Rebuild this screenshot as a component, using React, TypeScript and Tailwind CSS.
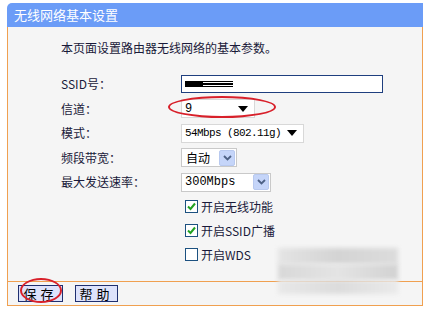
import React from "react";

const cjk = { fontFamily: '"SimSun", "Noto Sans CJK SC", sans-serif' };

const XpArrow = () => (
  <span className="flex h-[16px] w-[16px] items-center justify-center rounded-[2px] border border-[#b8c9ef] bg-[#c5d5f9]">
    <svg width="9" height="6" viewBox="0 0 9 6">
      <path d="M1 1 L4.5 4.5 L8 1" fill="none" stroke="#4d6185" strokeWidth="1.8" />
    </svg>
  </span>
);

const Tri = () => (
  <svg width="10" height="6" viewBox="0 0 10 6">
    <path d="M0 0 H10 L5 6 Z" fill="#000" />
  </svg>
);

const Check = ({ checked, label }: { checked: boolean; label: string }) => (
  <div className="flex h-[24px] items-center gap-[3px] pl-[4px]">
    <span className="flex h-[13px] w-[13px] items-center justify-center border border-[#1c5180] bg-white">
      {checked && (
        <svg width="9" height="9" viewBox="0 0 9 9">
          <path d="M1 4.5 L3.5 7 L8 1.5" fill="none" stroke="#21a121" strokeWidth="2" />
        </svg>
      )}
    </span>
    <span className="text-[12px] text-[#1a1a3a]">{label}</span>
  </div>
);

const Row = ({ label, children }: { label: string; children: React.ReactNode }) => (
  <div className="flex h-[24.5px] items-center">
    <span className="w-[120px] text-[12px] text-[#1a1a3a]">{label}</span>
    {children}
  </div>
);

export default function App() {
  return (
    <div className="relative h-[310px] w-[427px] bg-white pt-[3px] pl-[7px]" style={cjk}>
      <div className="w-[416px]">
        {/* header */}
        <div className="flex h-[24px] items-center rounded-tl-[5px] bg-[#6b9cf7] pl-[7px] text-[13px] text-white">
          无线网络基本设置
        </div>

        {/* body */}
        <div className="border-x border-[#f0a050] bg-[#f5f5f5]">
          <div className="pl-[53px] pt-[12px]">
            <div className="h-[18px] text-[12px] leading-[18px] text-[#1a1a3a]">本页面设置路由器无线网络的基本参数。</div>
            <div className="mt-[15px]">
              <Row label="SSID号：">
                <div className="flex h-[18px] w-[202px] items-center border border-[#1f3f7f] bg-white pl-[3px]">
                  <span className="h-[6px] w-[18px] bg-black" />
                  <span className="flex w-[30px] flex-col gap-[1px]">
                    <span className="h-[1px] bg-black" />
                    <span className="h-[2px] bg-black" />
                    <span className="h-[1px] bg-black" />
                  </span>
                </div>
              </Row>
              <Row label="信道：">
                <div className="flex h-[19px] w-[74px] items-center justify-between border border-[#d8d8d8] bg-white pr-[6px] pl-[3px] text-[12px]" style={{ fontFamily: '"Liberation Mono", monospace' }}>
                  <span>9</span>
                  <Tri />
                </div>
              </Row>
              <Row label="模式：">
                <div className="flex h-[19px] w-[123px] items-center justify-between border border-[#d8d8d8] bg-white pr-[6px] pl-[3px]">
                  <span style={{ fontFamily: '"Liberation Mono", monospace' }} className="whitespace-nowrap text-[11px] tracking-[-0.6px]">54Mbps (802.11g)</span>
                  <Tri />
                </div>
              </Row>
              <Row label="频段带宽：">
                <div className="flex h-[19px] w-[56px] items-center justify-between border border-[#c9c9c9] bg-white pr-[1px] pl-[4px] text-[12px]">
                  <span>自动</span>
                  <XpArrow />
                </div>
              </Row>
              <Row label="最大发送速率：">
                <div className="flex h-[19px] w-[90px] items-center justify-between border border-[#c9c9c9] bg-white pr-[1px] pl-[3px] text-[12px]">
                  <span style={{ fontFamily: '"Liberation Mono", monospace' }}>300Mbps</span>
                  <XpArrow />
                </div>
              </Row>
            </div>
            <div className="ml-[120px]">
              <Check checked label="开启无线功能" />
              <Check checked label="开启SSID广播" />
              <Check checked={false} label="开启WDS" />
            </div>
          </div>
          <div className="h-[14px]" />
        </div>

        {/* footer */}
        <div className="flex h-[25px] items-center gap-[12px] border border-[#f0a050] bg-[#f5f5f5] pl-[10px]">
          <button className="h-[17px] w-[45px] border border-[#1f2f6f] bg-[#dde2fb] text-[13px] leading-[15px] tracking-[4px] text-black">保存</button>
          <button className="h-[17px] w-[43px] border border-[#1f2f6f] bg-[#dde2fb] text-[13px] leading-[15px] tracking-[4px] text-black">帮助</button>
        </div>
      </div>

      {/* red annotation ellipses */}
      <div className="pointer-events-none absolute left-[168px] top-[96px] h-[22px] w-[108px] rounded-[50%] border-2 border-[#d8202a]" />
      <div className="pointer-events-none absolute left-[20px] top-[278px] h-[25px] w-[42px] rounded-[50%] border-2 border-[#d8202a]" />

      {/* blurred watermark */}
      <div className="pointer-events-none absolute left-[278px] top-[248px] flex w-[120px] flex-col">
        <div className="h-[16px] w-[120px] bg-gradient-to-r from-[#e4e4e4] via-[#d4d4d4] to-[#dcdcdc] blur-[2px]" />
        <div className="h-[16px] w-[120px] bg-gradient-to-r from-[#d8d8d8] via-[#e4e4e4] to-[#d2d2d2] blur-[2px]" />
        <div className="h-[14px] w-[120px] bg-gradient-to-r from-[#e8e8e8] via-[#dcdcdc] to-[#eaeaea] blur-[2px]" />
      </div>
    </div>
  );
}
